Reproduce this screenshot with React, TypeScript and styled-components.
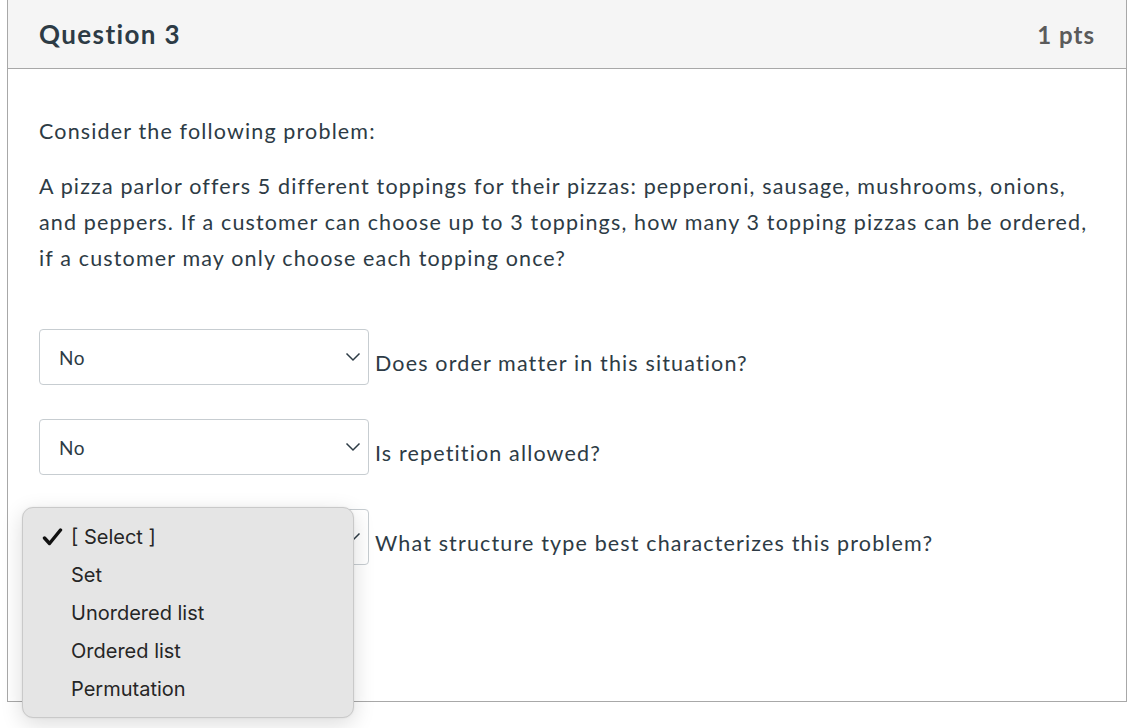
import React from "react";
import styled, { createGlobalStyle } from "styled-components";

const GlobalStyle = createGlobalStyle`
  html, body {
    margin: 0;
    padding: 0;
    background: #ffffff;
    min-height: 100vh;
  }
  body {
    font-family: Lato, "Open Sans", sans-serif;
    color: #2d3b45;
  }
`;

const Card = styled.div`
  margin: -1px 0 0 7px;
  width: 1120px;
  border: 1px solid #a8a8a8;
  box-sizing: border-box;
  background: #ffffff;
`;

const Header = styled.div`
  display: flex;
  justify-content: space-between;
  align-items: center;
  height: 69px;
  padding: 0 31px 0 31px;
  background: #f5f5f5;
  border-bottom: 1px solid #a8a8a8;
  box-sizing: border-box;
`;

const Title = styled.h2`
  margin: 0;
  font-size: 26px;
  font-weight: 700;
  letter-spacing: 1.4px;
  color: #2d3b45;
`;

const Points = styled.span`
  font-size: 24px;
  font-weight: 700;
  letter-spacing: 1px;
  color: #5b5b5b;
`;

const Content = styled.div`
  position: relative;
  padding: 44px 31px 136px 31px;
`;

const Paragraph = styled.p`
  margin: 0 0 19px 0;
  font-size: 21.5px;
  letter-spacing: 1.15px;
  line-height: 36px;
`;

const Answers = styled.div`
  display: flex;
  flex-direction: column;
  gap: 34px;
  margin-top: 53px;
`;

const Row = styled.div`
  position: relative;
  display: flex;
  align-items: center;
  gap: 6px;
`;

const SelectBox = styled.div`
  display: flex;
  align-items: center;
  justify-content: space-between;
  width: 330px;
  height: 56px;
  padding: 0 7px 0 19px;
  border: 1px solid #c7cdd1;
  border-radius: 4px;
  box-sizing: border-box;
  font-size: 19px;
  letter-spacing: 0.5px;
  color: #2d3b45;
`;

const RowLabel = styled.span`
  font-size: 21.5px;
  letter-spacing: 1.15px;
  padding-top: 11px;
`;

const Menu = styled.ul`
  position: absolute;
  left: -17px;
  top: -2px;
  width: 332px;
  height: 211px;
  margin: 0;
  padding: 10px 0 0 0;
  box-sizing: border-box;
  list-style: none;
  background: #e5e5e5;
  border: 1px solid #c9c9c9;
  border-radius: 11px;
  box-shadow: 0 6px 22px rgba(0, 0, 0, 0.14), 0 0 2px rgba(0, 0, 0, 0.08);
  font-family: Inter, "Liberation Sans", sans-serif;
  font-size: 20px;
  color: #262626;
`;

const MenuItem = styled.li`
  display: flex;
  align-items: center;
  height: 38px;
  padding-left: 19px;
`;

const Check = styled.span`
  display: inline-flex;
  width: 29px;
`;

const Chevron = () => (
  <svg width="16" height="10" viewBox="0 0 16 10" fill="none">
    <path d="M1.5 1.5l6.5 6.5 6.5-6.5" stroke="#2d3b45" strokeWidth="1.5" />
  </svg>
);

const CheckMark = () => (
  <svg width="21" height="18" viewBox="0 0 21 18" fill="none">
    <path
      d="M2.5 10l5 5.5L18.5 2"
      stroke="#111"
      strokeWidth="3.4"
      strokeLinecap="round"
      strokeLinejoin="round"
    />
  </svg>
);

const options = ["[ Select ]", "Set", "Unordered list", "Ordered list", "Permutation"];

export default function App() {
  return (
    <>
      <GlobalStyle />
      <Card>
        <Header>
          <Title>Question 3</Title>
          <Points>1 pts</Points>
        </Header>
        <Content>
          <Paragraph>Consider the following problem:</Paragraph>
          <Paragraph>
            A pizza parlor offers 5 different toppings for their pizzas: pepperoni, sausage,
            mushrooms, onions, and peppers. If a customer can choose up to 3 toppings, how many 3
            topping pizzas can be ordered, if a customer may only choose each topping once?
          </Paragraph>
          <Answers>
            <Row>
              <SelectBox>
                No
                <Chevron />
              </SelectBox>
              <RowLabel>Does order matter in this situation?</RowLabel>
            </Row>
            <Row>
              <SelectBox>
                No
                <Chevron />
              </SelectBox>
              <RowLabel>Is repetition allowed?</RowLabel>
            </Row>
            <Row>
              <SelectBox>
                [ Select ]
                <Chevron />
              </SelectBox>
              <RowLabel>What structure type best characterizes this problem?</RowLabel>
              <Menu>
                {options.map((o, i) => (
                  <MenuItem key={o}>
                    <Check>{i === 0 && <CheckMark />}</Check>
                    {o}
                  </MenuItem>
                ))}
              </Menu>
            </Row>
          </Answers>
        </Content>
      </Card>
    </>
  );
}
